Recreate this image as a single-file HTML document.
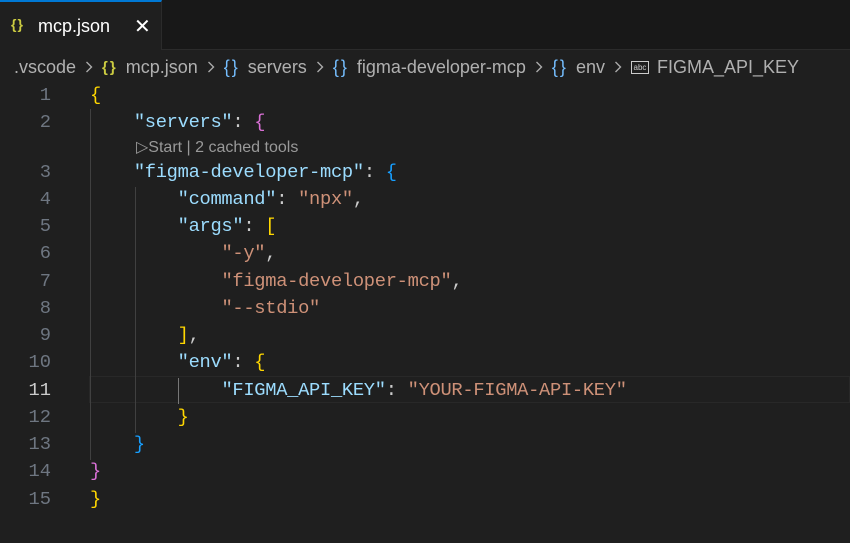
<!DOCTYPE html>
<html><head><meta charset="utf-8"><style>
body{margin:0;width:850px;height:543px;background:#1f1f1f;overflow:hidden;position:relative;font-family:"Liberation Sans",sans-serif}
.tabbar{position:absolute;left:0;top:0;width:850px;height:49px;background:#181818;border-bottom:1px solid #2b2b2b}
.tab{position:absolute;left:0;top:0;width:162px;height:50px;background:#1f1f1f;border-top:2px solid #0078d4;box-sizing:border-box;border-right:1px solid #2b2b2b}
.tab .ic{position:absolute;left:11px;top:14px;color:#cbcb41;font-size:14px;font-weight:bold;letter-spacing:1px}
.tab .nm{position:absolute;left:38px;top:14px;color:#fff;font-size:18px}
.tab .x{position:absolute;left:134px;top:12px;color:#fff;font-size:20px}
.bc{position:absolute;left:14px;top:56px;color:#b0b0b0;font-size:18px;white-space:nowrap;display:flex;align-items:center;height:22px}
.bc .c{color:#75beff;margin-right:8px;letter-spacing:2px}.bc .y{color:#cbcb41;font-weight:bold;margin-right:8px;font-size:15px;letter-spacing:2px}
.sep{display:inline-block;width:8px;height:12px;margin:0 9px 0 9px}
.abc{display:inline-block;width:16px;height:11px;border:1.5px solid #ccc;font-size:8px;line-height:11px;text-align:center;color:#ccc;margin-right:8px}
.code{position:absolute;left:0;top:82px;width:850px;font-family:"Liberation Mono",monospace;font-size:18.75px;letter-spacing:-0.3px}
.ln{height:27.25px;line-height:27.25px;position:relative;white-space:pre}
.num{position:absolute;left:0;width:51px;text-align:right;color:#6e7681;letter-spacing:0}
.t{position:absolute;left:90px;color:#ccc}
.lens{height:22px;line-height:22px;position:relative;font-family:"Liberation Sans",sans-serif;font-size:16px;color:#999;letter-spacing:0}
.k{color:#9cdcfe}.s2{color:#ce9178}.g{color:#ffd700}.p{color:#da70d6}.b{color:#179fff}
.guide{position:absolute;width:1px;background:#404040}
.hl{position:absolute;left:89px;right:0;border:1.5px solid #282828}
</style></head><body>
<div class="tabbar"></div>
<div class="tab"><span class="ic">{}</span><span class="nm">mcp.json</span><span class="x">✕</span></div>
<div class="bc">.vscode<svg class="sep" viewBox="0 0 8 12"><path d="M1.5 1l5 5-5 5" fill="none" stroke="#aaa" stroke-width="1.4"/></svg><span class="y">{}</span>mcp.json<svg class="sep" viewBox="0 0 8 12"><path d="M1.5 1l5 5-5 5" fill="none" stroke="#aaa" stroke-width="1.4"/></svg><span class="c">{}</span>servers<svg class="sep" viewBox="0 0 8 12"><path d="M1.5 1l5 5-5 5" fill="none" stroke="#aaa" stroke-width="1.4"/></svg><span class="c">{}</span>figma-developer-mcp<svg class="sep" viewBox="0 0 8 12"><path d="M1.5 1l5 5-5 5" fill="none" stroke="#aaa" stroke-width="1.4"/></svg><span class="c">{}</span>env<svg class="sep" viewBox="0 0 8 12"><path d="M1.5 1l5 5-5 5" fill="none" stroke="#aaa" stroke-width="1.4"/></svg><span class="abc">abc</span>FIGMA_API_KEY</div>
<div class="hl" style="top:376px;height:25px"></div>
<div class="guide" style="left:90px;top:109px;height:351px"></div>
<div class="guide" style="left:135px;top:187px;height:246px"></div>
<div class="guide" style="left:178px;top:378px;height:26px;background:#777"></div>
<div class="code">
<div class="ln"><span class="num">1</span><span class="t"><span class="g">{</span></span></div>
<div class="ln"><span class="num">2</span><span class="t">    <span class="k">"servers"</span>: <span class="p">{</span></span></div>
<div class="lens"><span style="position:absolute;left:136px">▷Start | 2 cached tools</span></div>
<div class="ln"><span class="num">3</span><span class="t">    <span class="k">"figma-developer-mcp"</span>: <span class="b">{</span></span></div>
<div class="ln"><span class="num">4</span><span class="t">        <span class="k">"command"</span>: <span class="s2">"npx"</span>,</span></div>
<div class="ln"><span class="num">5</span><span class="t">        <span class="k">"args"</span>: <span class="g">[</span></span></div>
<div class="ln"><span class="num">6</span><span class="t">            <span class="s2">"-y"</span>,</span></div>
<div class="ln"><span class="num">7</span><span class="t">            <span class="s2">"figma-developer-mcp"</span>,</span></div>
<div class="ln"><span class="num">8</span><span class="t">            <span class="s2">"--stdio"</span></span></div>
<div class="ln"><span class="num">9</span><span class="t">        <span class="g">]</span>,</span></div>
<div class="ln"><span class="num">10</span><span class="t">        <span class="k">"env"</span>: <span class="g">{</span></span></div>
<div class="ln"><span class="num" style="color:#ccc">11</span><span class="t">            <span class="k">"FIGMA_API_KEY"</span>: <span class="s2">"YOUR-FIGMA-API-KEY"</span></span></div>
<div class="ln"><span class="num">12</span><span class="t">        <span class="g">}</span></span></div>
<div class="ln"><span class="num">13</span><span class="t">    <span class="b">}</span></span></div>
<div class="ln"><span class="num">14</span><span class="t"><span class="p">}</span></span></div>
<div class="ln"><span class="num">15</span><span class="t"><span class="g">}</span></span></div>
</div>
</body></html>
